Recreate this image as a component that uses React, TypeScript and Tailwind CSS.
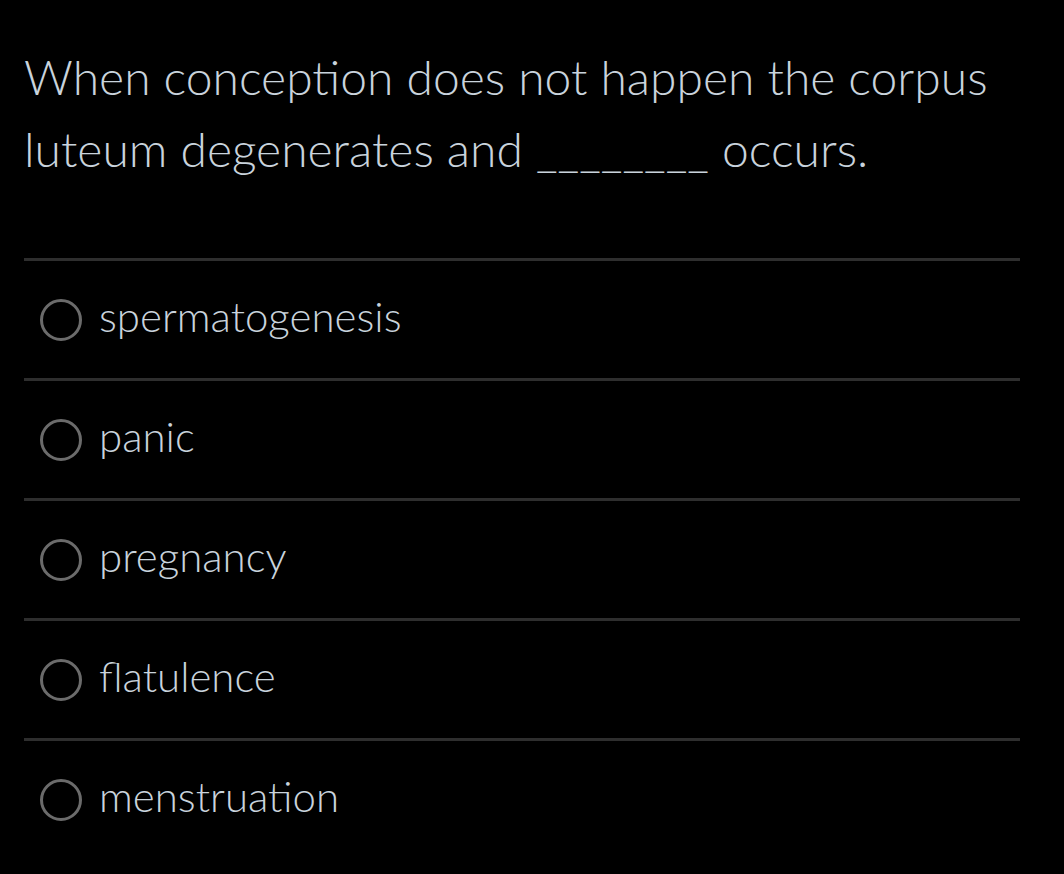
const options = ['spermatogenesis', 'panic', 'pregnancy', 'flatulence', 'menstruation']

export default function App() {
  return (
    <div className="min-h-[874px] w-full bg-black px-6 pt-[41px] font-['Lato',sans-serif] font-light text-[#c9d3dc]">
      <h1 className="text-[48px] font-light leading-[72px]">
        When conception does not happen the corpus luteum degenerates and ________ occurs.
      </h1>
      <div className="mt-[73px] w-[996px]">
        {options.map((o) => (
          <label key={o} className="flex h-[120px] items-center gap-[17px] border-t-[3px] border-[#2e2e2e] pl-4">
            <span className="h-[42px] w-[42px] shrink-0 rounded-full border-[3px] border-[#6b6b6b]" />
            <span className="pb-2 text-[42px] leading-none">{o}</span>
          </label>
        ))}
      </div>
    </div>
  )
}
